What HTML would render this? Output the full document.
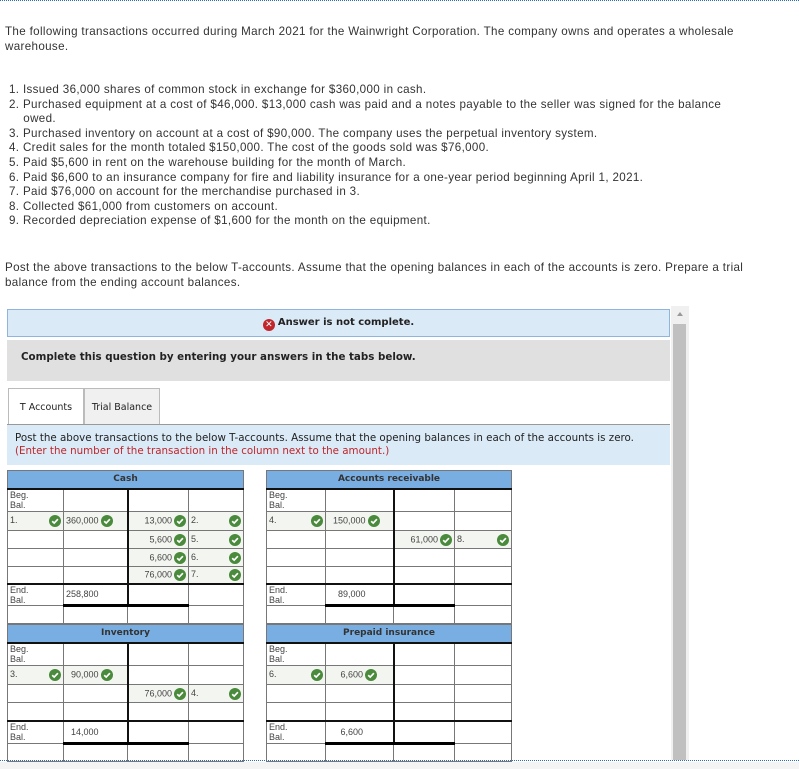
<!DOCTYPE html>
<html><head><meta charset="utf-8"><style>
body{margin:0;width:799px;height:769px;overflow:hidden;background:#fff;font-family:"Liberation Sans",sans-serif;color:#333;position:relative}
.topl{position:absolute;left:0;top:0;width:799px;border-top:1px dotted #2a6db5}
.botl{position:absolute;left:0;top:760px;width:799px;border-top:1px dotted #2a6db5}
.bot{position:absolute;left:0;top:762px;width:799px;height:7px;background:#f4f4f4}
.p{position:absolute;left:5px;font-size:11.6px;letter-spacing:0.35px;line-height:14.6px;color:#333;margin:0}
.ab{position:absolute;left:7px;top:309px;width:661px;height:26px;background:#dbeaf7;border:1px solid #8fb4de;text-align:center;font:bold 10px "DejaVu Sans",sans-serif;line-height:26px;color:#222}
.x{display:inline-block;width:12px;height:12px;border-radius:50%;background:#c0262b;color:#fff;font-size:9px;line-height:12px;vertical-align:-2px;margin-right:3px}
.gb{position:absolute;left:7px;top:340px;width:663px;height:41px;background:#e0e0e0;font:bold 10.3px "DejaVu Sans",sans-serif;line-height:35px;text-indent:14px;color:#222}
.tab{position:absolute;top:388px;height:36px;border:1px solid #bbb;border-bottom:none;font:9.5px "DejaVu Sans",sans-serif;line-height:38px;text-align:center;color:#222}
.tl{position:absolute;left:7px;top:424px;width:663px;border-top:1px solid #999}
.ib{position:absolute;left:7px;top:425px;width:663px;height:40px;background:#dbeaf7;font:10.3px "DejaVu Sans",sans-serif;line-height:12.5px;color:#222;padding:7px 0 0 8px;box-sizing:border-box;white-space:nowrap}
.ib span{color:#c0262b}
.sb{position:absolute;left:671px;top:306px;width:18px;height:454px;background:#f0f0f0}
.sb i{position:absolute;left:6px;top:6px;width:0;height:0;border-left:3px solid transparent;border-right:3px solid transparent;border-bottom:4px solid #999}
.sb b{position:absolute;left:2px;top:18px;width:13px;height:436px;background:#c0c0c0}
table{position:absolute;border-collapse:collapse;table-layout:fixed;font-size:9px;color:#444}
td{border:1px solid #777;padding:0 2px;vertical-align:middle;line-height:10px;white-space:nowrap;overflow:hidden}
td.h{background:#79aee3;border-bottom:2px solid #111;text-align:center;font:bold 9px "DejaVu Sans",sans-serif;color:#333}
td.g{background:#f3f6f0}
td.bl{border-right:2px solid #111}
td.r{text-align:right}
tr.e td{border-top:2px solid #111}
td.u{border-bottom:3px solid #000}
.k{display:inline-block;width:12px;height:12px;vertical-align:middle;margin-left:2px}
.fr{float:right;margin-top:0}
</style></head><body>
<div class="topl"></div>
<p class="p" style="top:25px;width:760px">The following transactions occurred during March 2021 for the Wainwright Corporation. The company owns and operates a wholesale warehouse.</p>
<div class="p" style="top:83px;left:9px;width:740px">
1. Issued 36,000 shares of common stock in exchange for $360,000 in cash.<br>
2. Purchased equipment at a cost of $46,000. $13,000 cash was paid and a notes payable to the seller was signed for the balance<br>&nbsp;&nbsp;&nbsp;&nbsp;owed.<br>
3. Purchased inventory on account at a cost of $90,000. The company uses the perpetual inventory system.<br>
4. Credit sales for the month totaled $150,000. The cost of the goods sold was $76,000.<br>
5. Paid $5,600 in rent on the warehouse building for the month of March.<br>
6. Paid $6,600 to an insurance company for fire and liability insurance for a one-year period beginning April 1, 2021.<br>
7. Paid $76,000 on account for the merchandise purchased in 3.<br>
8. Collected $61,000 from customers on account.<br>
9. Recorded depreciation expense of $1,600 for the month on the equipment.</div>
<p class="p" style="top:261px;width:765px">Post the above transactions to the below T-accounts. Assume that the opening balances in each of the accounts is zero. Prepare a trial balance from the ending account balances.</p>
<div class="ab"><span class="x">✕</span>Answer is not complete.</div>
<div class="gb">Complete this question by entering your answers in the tabs below.</div>
<div class="tab" style="left:8px;width:74px;background:#fff">T Accounts</div>
<div class="tab" style="left:84px;width:74px;background:#f0f0f0">Trial Balance</div>
<div class="tl"></div>
<div class="ib">Post the above transactions to the below T-accounts. Assume that the opening balances in each of the accounts is zero.<br><span>(Enter the number of the transaction in the column next to the amount.)</span></div>
<div class="sb"><i></i><b></b></div>

<svg width="0" height="0" style="position:absolute"><defs><symbol id="ck" viewBox="0 0 12 12"><circle cx="6" cy="6" r="6" fill="#4a8a3c"/><path d="M3.2 6.2 5.2 8.1 8.9 4.2" stroke="#fff" stroke-width="1.7" fill="none"/></symbol></defs></svg>

<table style="left:7px;top:470px;width:236px">
<col style="width:56px"><col style="width:64px"><col style="width:61px"><col style="width:55px">
<tr style="height:18px"><td class="h" colspan="4">Cash</td></tr>
<tr style="height:23px"><td>Beg.<br>Bal.</td><td class="bl"></td><td></td><td></td></tr>
<tr style="height:19px"><td class="g">1.<svg class="k fr"><use href="#ck"/></svg></td><td class="g bl">360,000<svg class="k"><use href="#ck"/></svg></td><td class="g r">13,000<svg class="k"><use href="#ck"/></svg></td><td class="g">2.<svg class="k fr"><use href="#ck"/></svg></td></tr>
<tr style="height:18px"><td></td><td class="bl"></td><td class="g r">5,600<svg class="k"><use href="#ck"/></svg></td><td class="g">5.<svg class="k fr"><use href="#ck"/></svg></td></tr>
<tr style="height:18px"><td></td><td class="bl"></td><td class="g r">6,600<svg class="k"><use href="#ck"/></svg></td><td class="g">6.<svg class="k fr"><use href="#ck"/></svg></td></tr>
<tr style="height:17px"><td></td><td class="bl"></td><td class="g r">76,000<svg class="k"><use href="#ck"/></svg></td><td class="g">7.<svg class="k fr"><use href="#ck"/></svg></td></tr>
<tr class="e" style="height:22px"><td>End.<br>Bal.</td><td class="bl u">258,800</td><td class="u"></td><td></td></tr>
<tr style="height:18px"><td></td><td></td><td></td><td></td></tr>
</table>

<table style="left:266px;top:470px;width:245px">
<col style="width:59px"><col style="width:68px"><col style="width:61px"><col style="width:57px">
<tr style="height:18px"><td class="h" colspan="4">Accounts receivable</td></tr>
<tr style="height:23px"><td>Beg.<br>Bal.</td><td class="bl"></td><td></td><td></td></tr>
<tr style="height:19px"><td class="g">4.<svg class="k fr"><use href="#ck"/></svg></td><td class="g bl">&nbsp;&nbsp;150,000<svg class="k"><use href="#ck"/></svg></td><td></td><td></td></tr>
<tr style="height:18px"><td></td><td class="bl"></td><td class="g r">61,000<svg class="k"><use href="#ck"/></svg></td><td class="g">8.<svg class="k fr"><use href="#ck"/></svg></td></tr>
<tr style="height:18px"><td></td><td class="bl"></td><td></td><td></td></tr>
<tr style="height:17px"><td></td><td class="bl"></td><td></td><td></td></tr>
<tr class="e" style="height:22px"><td>End.<br>Bal.</td><td class="bl u">&nbsp;&nbsp;&nbsp;&nbsp;89,000</td><td class="u"></td><td></td></tr>
<tr style="height:18px"><td></td><td></td><td></td><td></td></tr>
</table>

<table style="left:7px;top:624px;width:236px">
<col style="width:56px"><col style="width:64px"><col style="width:61px"><col style="width:55px">
<tr style="height:18px"><td class="h" colspan="4">Inventory</td></tr>
<tr style="height:23px"><td>Beg.<br>Bal.</td><td class="bl"></td><td></td><td></td></tr>
<tr style="height:19px"><td class="g">3.<svg class="k fr"><use href="#ck"/></svg></td><td class="g bl">&nbsp;&nbsp;90,000<svg class="k"><use href="#ck"/></svg></td><td></td><td></td></tr>
<tr style="height:18px"><td></td><td class="bl"></td><td class="g r">76,000<svg class="k"><use href="#ck"/></svg></td><td class="g">4.<svg class="k fr"><use href="#ck"/></svg></td></tr>
<tr style="height:18px"><td></td><td class="bl"></td><td></td><td></td></tr>
<tr class="e" style="height:23px"><td>End.<br>Bal.</td><td class="bl u">&nbsp;&nbsp;14,000</td><td class="u"></td><td></td></tr>
<tr style="height:18px"><td></td><td></td><td></td><td></td></tr>
</table>

<table style="left:266px;top:624px;width:245px">
<col style="width:59px"><col style="width:68px"><col style="width:61px"><col style="width:57px">
<tr style="height:18px"><td class="h" colspan="4">Prepaid insurance</td></tr>
<tr style="height:23px"><td>Beg.<br>Bal.</td><td class="bl"></td><td></td><td></td></tr>
<tr style="height:19px"><td class="g">6.<svg class="k fr"><use href="#ck"/></svg></td><td class="g bl">&nbsp;&nbsp;&nbsp;&nbsp;&nbsp;6,600<svg class="k"><use href="#ck"/></svg></td><td></td><td></td></tr>
<tr style="height:18px"><td></td><td class="bl"></td><td></td><td></td></tr>
<tr style="height:18px"><td></td><td class="bl"></td><td></td><td></td></tr>
<tr class="e" style="height:23px"><td>End.<br>Bal.</td><td class="bl u">&nbsp;&nbsp;&nbsp;&nbsp;&nbsp;6,600</td><td class="u"></td><td></td></tr>
<tr style="height:18px"><td></td><td></td><td></td><td></td></tr>
</table>

<div class="botl"></div>
<div class="bot"></div>
</body></html>
